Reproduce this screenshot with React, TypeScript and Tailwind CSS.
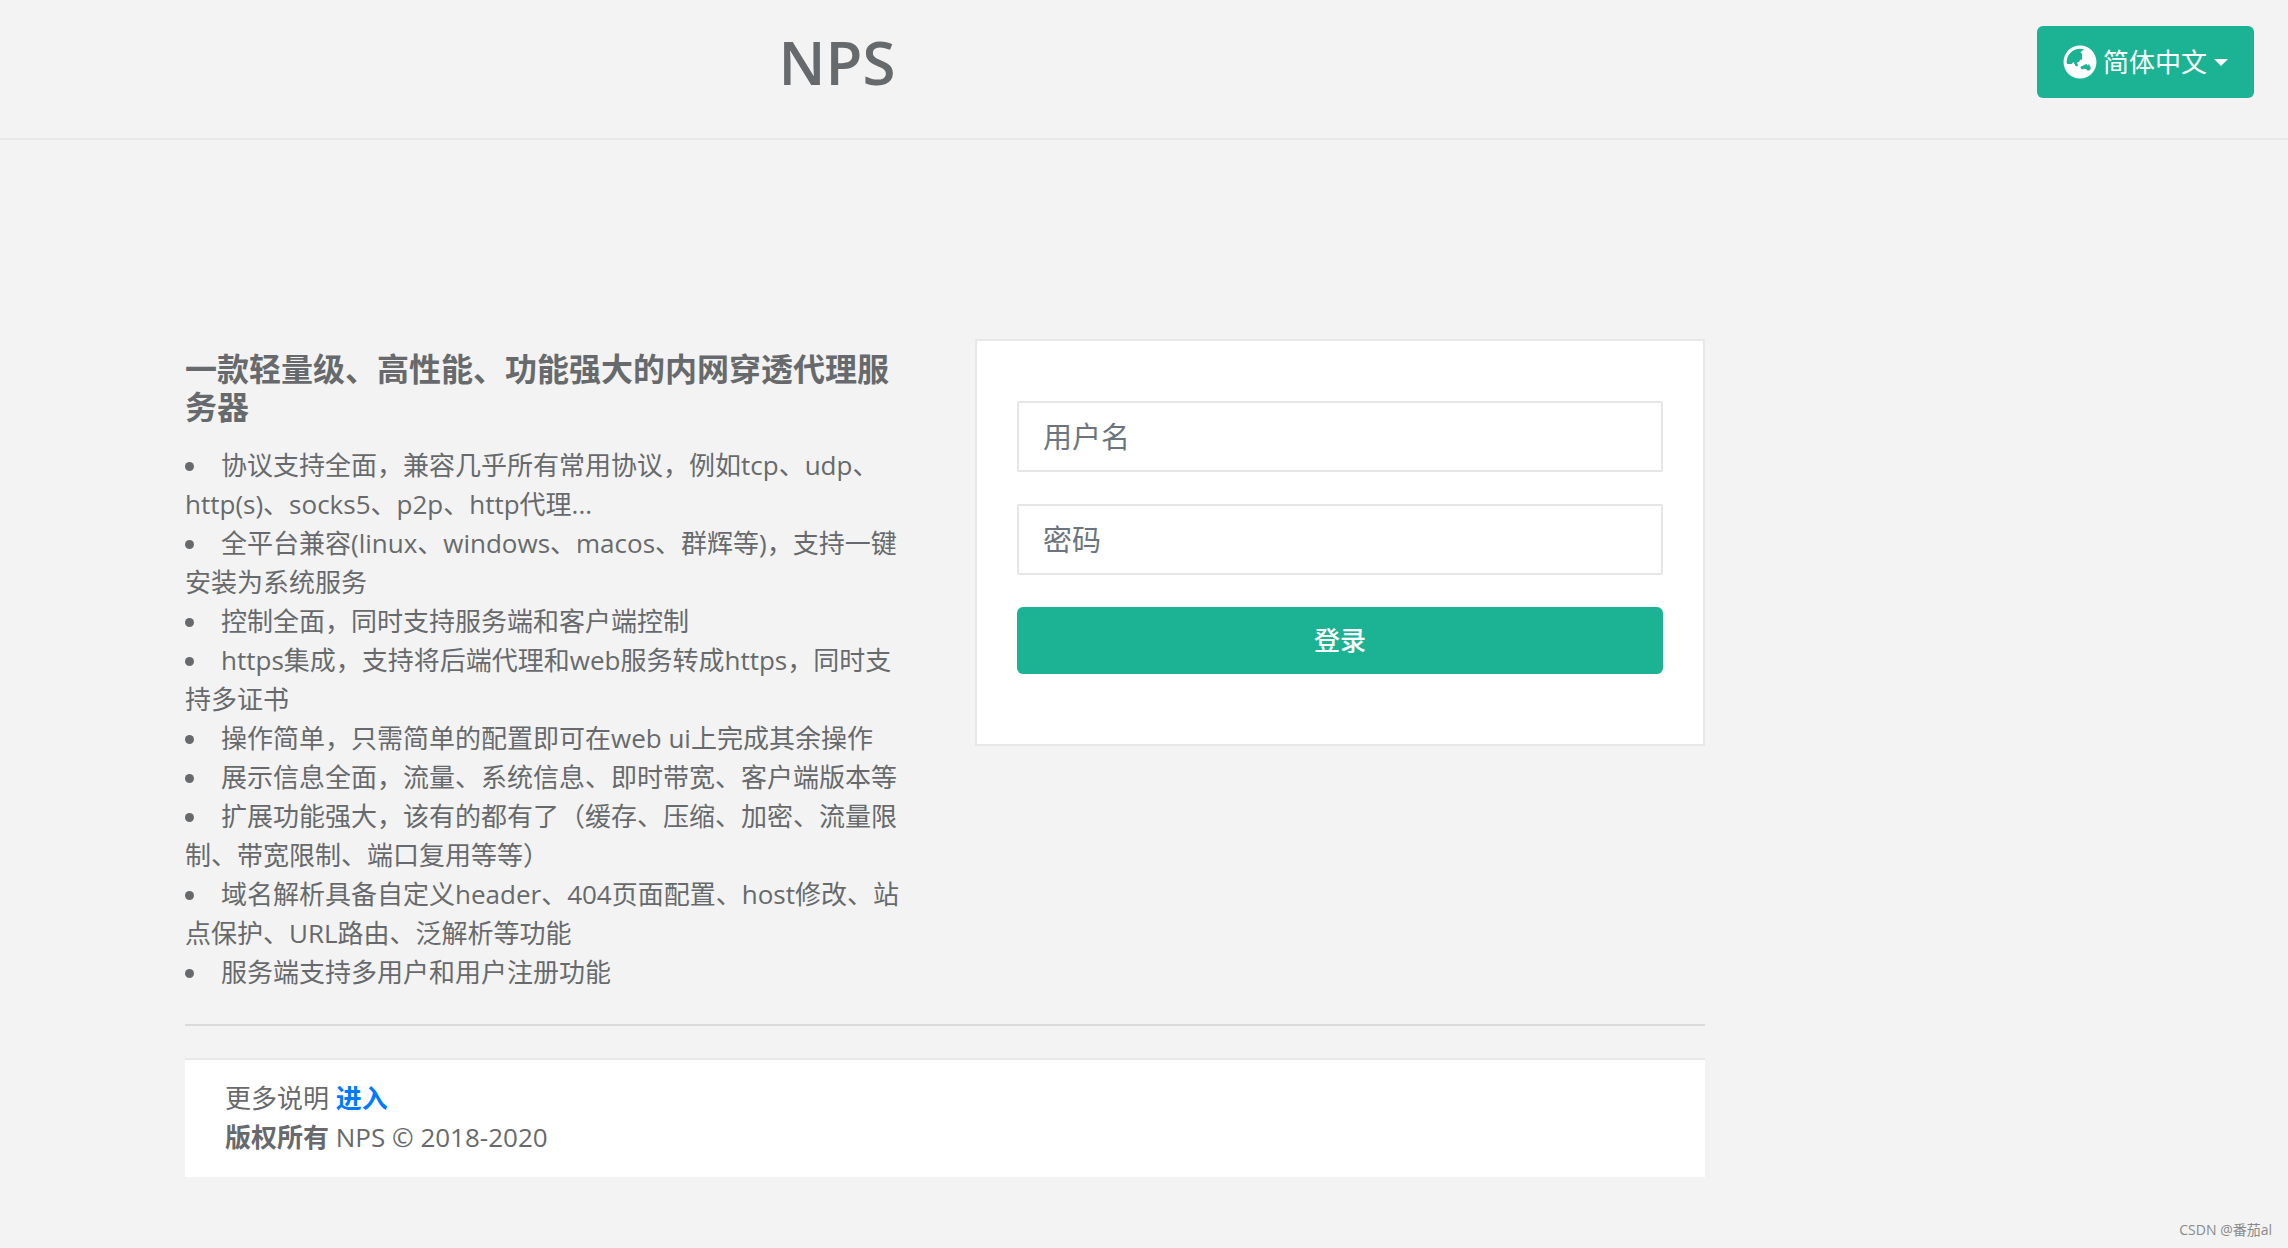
import React, { useState } from "react";
import { FaGlobeAsia } from "react-icons/fa";

const FEATURES = [
  "协议支持全面，兼容几乎所有常用协议，例如tcp、udp、http(s)、socks5、p2p、http代理...",
  "全平台兼容(linux、windows、macos、群辉等)，支持一键安装为系统服务",
  "控制全面，同时支持服务端和客户端控制",
  "https集成，支持将后端代理和web服务转成https，同时支持多证书",
  "操作简单，只需简单的配置即可在web ui上完成其余操作",
  "展示信息全面，流量、系统信息、即时带宽、客户端版本等",
  "扩展功能强大，该有的都有了（缓存、压缩、加密、流量限制、带宽限制、端口复用等等）",
  "域名解析具备自定义header、404页面配置、host修改、站点保护、URL路由、泛解析等功能",
  "服务端支持多用户和用户注册功能",
];

function Header() {
  return (
    <header className="flex h-[140px] items-start justify-between border-b-2 border-[#e7e8e9] pr-[34px]">
      <h1 className="w-[1674px] shrink pt-[26px] text-center text-[60px] leading-[72px] font-semibold">NPS</h1>
      <button
        type="button"
        aria-haspopup="menu"
        className="mt-[26px] flex h-[72px] shrink-0 items-center rounded-md bg-[#1cb394] px-[26px] text-white"
      >
        <FaGlobeAsia className="mr-[6px] size-[34px]" aria-hidden="true" />
        简体中文
        <span className="ml-[7px] border-x-[7px] border-t-[7px] border-x-transparent border-t-white" />
      </button>
    </header>
  );
}

function LoginForm() {
  const [username, setUsername] = useState("");
  const [password, setPassword] = useState("");
  const inputClass =
    "block h-[71px] w-full rounded-[2px] border-2 border-[#e5e6e7] bg-white px-6 text-[29px] outline-none placeholder:text-[#6c757d] focus:border-[#1cb394]";

  return (
    <form
      onSubmit={(event) => event.preventDefault()}
      className="flex flex-col gap-8 border-2 border-[#e7e8e9] bg-white px-10 pt-[60px] pb-[70px]"
    >
      <input
        aria-label="用户名"
        placeholder="用户名"
        value={username}
        onChange={(event) => setUsername(event.target.value)}
        className={inputClass}
      />
      <input
        type="password"
        aria-label="密码"
        placeholder="密码"
        value={password}
        onChange={(event) => setPassword(event.target.value)}
        className={inputClass}
      />
      <button type="submit" className="h-[67px] w-full rounded-md bg-[#1cb394] font-medium text-white">
        登录
      </button>
    </form>
  );
}

export default function App() {
  return (
    <div
      lang="zh-CN"
      className="relative min-h-screen bg-[#f3f3f3] font-['Open_Sans','Noto_Sans_CJK_SC',sans-serif] text-[26px] leading-[39px] text-[#676a6c]"
    >
      <Header />

      <div className="pr-[398px]">
        <main className="mx-auto max-w-[1600px] px-10 pt-[199px]">
          <div className="grid grid-cols-2 gap-[60px]">
            <section className="pt-[11px]">
              <h2 className="mb-5 text-[32px] leading-[38px] font-semibold">
                一款轻量级、高性能、功能强大的内网穿透代理服务器
              </h2>
              <ul className="list-inside list-disc">
                {FEATURES.map((feature) => (
                  <li key={feature}>{feature}</li>
                ))}
              </ul>
            </section>
            <div>
              <LoginForm />
            </div>
          </div>

          <hr className="mt-8 mb-8 border-t-2 border-[#d9dadb]" />

          <footer className="border-t-2 border-[#e7e8e9] bg-white px-10 pt-[19px] pb-5">
            <div>
              更多说明{" "}
              <a href="#docs" className="font-bold text-[#007bff]">
                进入
              </a>
            </div>
            <div>
              <strong className="font-bold">版权所有</strong> NPS © 2018-2020
            </div>
          </footer>
        </main>
      </div>

      <div className="absolute right-4 bottom-2 text-sm leading-5 text-[#8a8a8a]">CSDN @番茄al</div>
    </div>
  );
}
